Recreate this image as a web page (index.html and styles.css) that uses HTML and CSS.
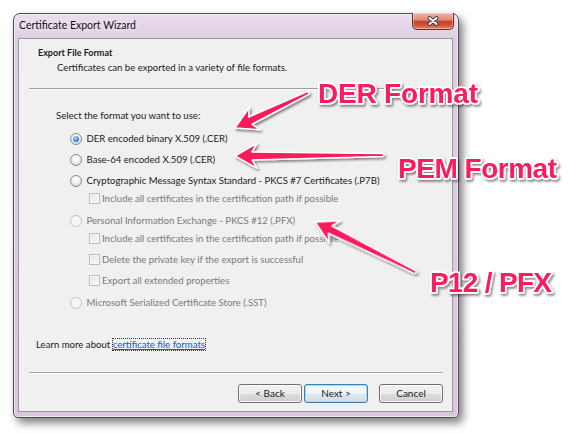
FILE: index.html
```html
<!DOCTYPE html>
<html lang="en">
<head>
<meta charset="utf-8">
<title>Certificate Export Wizard</title>
<link rel="stylesheet" href="styles.css">
</head>
<body>
<div class="stage">
  <div class="window">
    <div class="titlebar">
      <span class="title">Certificate Export Wizard</span>
      <div class="close">
        <svg width="12" height="10" viewBox="0 0 12 10">
          <path d="M2.5 2 L9.5 8 M9.5 2 L2.5 8" stroke="#3b3b46" stroke-width="3.8" stroke-linecap="round"/>
          <path d="M2.5 2 L9.5 8 M9.5 2 L2.5 8" stroke="#ffffff" stroke-width="2" stroke-linecap="round"/>
        </svg>
      </div>
    </div>
    <div class="panel">
      <div class="header">
        <div class="h-title">Export File Format</div>
        <div class="h-sub">Certificates can be exported in a variety of file formats.</div>
      </div>
      <div class="rule rule-top"></div>
      <div class="prompt">Select the format you want to use:</div>
      <div class="options">
        <div class="opt"><span class="radio checked"></span><span>DER encoded binary X.509 (.CER)</span></div>
        <div class="opt"><span class="radio"></span><span>Base-64 encoded X.509 (.CER)</span></div>
        <div class="opt"><span class="radio"></span><span>Cryptographic Message Syntax Standard - PKCS #7 Certificates (.P7B)</span></div>
        <div class="sub-group">
          <div class="opt sub disabled"><span class="check"></span><span>Include all certificates in the certification path if possible</span></div>
        </div>
        <div class="opt disabled"><span class="radio"></span><span>Personal Information Exchange - PKCS #12 (.PFX)</span></div>
        <div class="sub-group">
          <div class="opt sub disabled"><span class="check"></span><span>Include all certificates in the certification path if possible</span></div>
          <div class="opt sub disabled"><span class="check"></span><span>Delete the private key if the export is successful</span></div>
          <div class="opt sub disabled"><span class="check"></span><span>Export all extended properties</span></div>
        </div>
        <div class="opt disabled"><span class="radio"></span><span>Microsoft Serialized Certificate Store (.SST)</span></div>
      </div>
      <div class="learn">Learn more about <a class="link" href="#">certificate file formats</a></div>
      <div class="rule rule-bottom"></div>
      <div class="buttons">
        <button class="btn">&lt; Back</button>
        <button class="btn btn-default">Next &gt;</button>
        <button class="btn btn-cancel">Cancel</button>
      </div>
    </div>
  </div>

  <svg class="annot" width="580" height="433" viewBox="0 0 580 433">
    <defs>
      <filter id="shadow" x="-20%" y="-30%" width="150%" height="170%">
        <feDropShadow dx="1.5" dy="2" stdDeviation="1.3" flood-color="#000" flood-opacity="0.45"/>
      </filter>
    </defs>
    <g class="arrows" filter="url(#shadow)">
      <path transform="translate(235 128) rotate(-25.6)" d="M0 0 L22 -12.5 L17 -4 L81 -1.5 Q83 0 81 1.5 L17 4 L22 12.5 Z"/>
      <path transform="translate(235 156) rotate(-0.4)" d="M0 0 L22 -12.5 L17 -4 L148 -1.5 Q150 0 148 1.5 L17 4 L22 12.5 Z"/>
      <path transform="translate(315 222) rotate(26.6)" d="M0 0 L22 -12.5 L17 -4 L112 -1.5 Q114 0 112 1.5 L17 4 L22 12.5 Z"/>
    </g>
    <g class="labels" filter="url(#shadow)">
      <text x="318" y="103" textLength="160">DER Format</text>
      <text x="398" y="178" textLength="159">PEM Format</text>
      <text x="430" y="292" textLength="122">P12 / PFX</text>
    </g>
  </svg>
</div>
</body>
</html>
```

FILE: styles.css
```css
* { box-sizing: border-box; }

body {
  margin: 0;
  background: #ffffff;
  font-family: Lato, "Liberation Sans", sans-serif;
  font-size: 9.6px;
  color: #1b1b1b;
}

.stage {
  position: relative;
  width: 580px;
  height: 433px;
  overflow: hidden;
  padding: 13px 0 0 13px;
}

/* window frame */
.window {
  width: 446px;
  height: 405px;
  border: 1px solid #4f4a57;
  border-radius: 7px 7px 5px 5px;
  background: linear-gradient(180deg, #ebdeec 0, #dfcee2 24px, #d9c5dc 100%);
  box-shadow: inset 0 0 0 1px rgba(255,255,255,0.55), 4px 5px 9px rgba(0,0,0,0.5);
  padding: 0 5px 5px 4px;
  display: flex;
  flex-direction: column;
}

.titlebar {
  height: 24px;
  flex: none;
  display: flex;
  justify-content: space-between;
  align-items: flex-start;
}

.title {
  margin: 4px 0 0 1px;
  font-size: 10.5px;
  line-height: 14px;
  color: #111;
  text-shadow: 0 0 6px rgba(255,255,255,0.9);
}

.close {
  width: 42px;
  height: 17px;
  margin: -1px -1px 0 0;
  border: 1px solid #6a2f2c;
  border-top: none;
  border-radius: 0 0 5px 5px;
  background: linear-gradient(180deg, #eeb3a6 0%, #e08d7a 42%, #c9412a 54%, #cc533c 76%, #e08a75 100%);
  box-shadow: inset 0 0 0 1px rgba(255,255,255,0.35);
  display: flex;
  align-items: center;
  justify-content: center;
}

/* content panel */
.panel {
  flex: 1;
  background: #f0f0f0;
  border: 1px solid #9d98a3;
  display: flex;
  flex-direction: column;
}

.header {
  padding: 7px 0 0 19px;
}

.h-title {
  font-weight: 700;
  font-size: 9px;
  line-height: 14px;
}

.h-sub {
  margin: 1px 0 0 19px;
  line-height: 14px;
}

.rule {
  height: 2px;
  border-top: 1px solid #a0a0a0;
  border-bottom: 1px solid #ffffff;
  margin: 0 9px 0 10px;
}

.rule-top { margin-top: 13px; }

.prompt {
  margin: 16px 0 0 37px;
  line-height: 20px;
}

.options {
  margin: 2px 0 0 51px;
  display: flex;
  flex-direction: column;
}

.opt {
  height: 21px;
  display: flex;
  align-items: center;
  gap: 5px;
}

.opt.sub {
  padding-left: 19px;
  gap: 2px;
}

.sub-group {
  margin: -3px 0 1px 0;
}

.opt.disabled { color: #7a7a7a; }

.radio {
  flex: none;
  width: 12px;
  height: 12px;
  margin-left: -0.5px;
  border-radius: 50%;
  border: 1px solid #8b8b8b;
  background: radial-gradient(circle at 50% 35%, #ffffff 0, #f1f1f1 45%, #cdcdcd 100%);
  display: flex;
  align-items: center;
  justify-content: center;
}

.radio.checked::after {
  content: "";
  width: 6px;
  height: 6px;
  border-radius: 50%;
  background: radial-gradient(circle at 40% 35%, #b8e2ff 0, #3a86d6 55%, #1a4d93 100%);
}

.disabled .radio {
  border-color: #c6c6c6;
  background: #f5f5f5;
}

.check {
  flex: none;
  width: 11px;
  height: 11px;
  border: 1px solid #bdbdbd;
  background: linear-gradient(135deg, #e3e3e3, #fbfbfb);
  box-shadow: inset 0 0 0 1px #f7f7f7;
}

.learn {
  margin: auto 0 17px 17px;
  line-height: 20px;
}

.link {
  color: #0066cc;
  text-decoration: underline;
  outline: 1px dotted #333;
}

.rule-bottom { margin-bottom: 10px; }

.buttons {
  display: flex;
  justify-content: flex-end;
  padding-right: 9px;
  margin-bottom: 8px;
}

.btn {
  width: 64px;
  height: 19px;
  padding: 0;
  border: 1px solid #707070;
  border-radius: 3px;
  background: linear-gradient(180deg, #f2f2f2 0%, #ebebeb 50%, #dddddd 51%, #cfcfcf 100%);
  box-shadow: inset 0 0 0 1px rgba(255,255,255,0.8);
  font-family: inherit;
  font-size: 10px;
  color: #1b1b1b;
  line-height: 17px;
}

.btn-default {
  margin-left: 2px;
  border-color: #3c7fb1;
  box-shadow: inset 0 0 0 1px #a6dcf6;
  background: linear-gradient(180deg, #f4f9fc 0%, #edf3f7 50%, #e0e8ee 51%, #d4dde4 100%);
}

.btn-cancel { margin-left: 11px; }

/* annotations */
.annot {
  position: absolute;
  left: 0;
  top: 0;
  pointer-events: none;
}

.arrows path {
  fill: #f81d5d;
  stroke: #ffffff;
  stroke-width: 1.5;
  stroke-linejoin: round;
}

.labels text {
  font-family: "Liberation Sans", Arial, sans-serif;
  font-weight: 700;
  font-size: 28px;
  fill: #fa1c5d;
  stroke: #ffffff;
  stroke-width: 3.5;
  stroke-linejoin: round;
  paint-order: stroke;
}
```
